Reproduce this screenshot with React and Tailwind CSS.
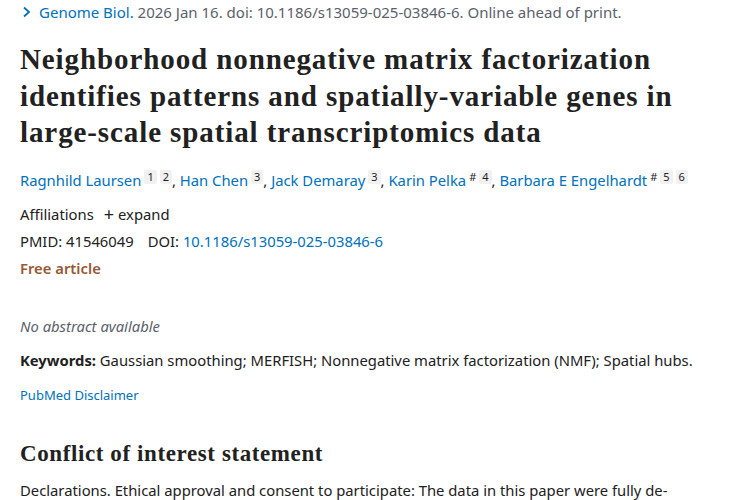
import React from "react";

const Sup = ({ children, plain }) =>
  plain ? (
    <span className="inline-block align-[5px] text-[11px] leading-[14px] text-[#212121] ml-[3px]">{children}</span>
  ) : (
    <span className="inline-block align-[5px] text-[11px] leading-[14px] text-[#212121] bg-[#f1f1f1] rounded-[2px] px-[3px] ml-[3px]">{children}</span>
  );

const serif = { fontFamily: '"Liberation Serif", "DejaVu Serif", serif' };

export default function App() {
  return (
    <div className="w-[750px] h-[500px] overflow-hidden bg-white px-[20px] flex flex-col text-[#212121] text-[14.8px] leading-[22px]" style={{ fontFamily: '"Noto Sans", "Open Sans", sans-serif' }}>
      <div className="pt-[1px] text-[15px] text-[#5b616b] flex items-center">
        <svg width="10" height="12" viewBox="0 0 10 12" className="mr-[7px] ml-[2px]">
          <path d="M2 1.5 L7 6 L2 10.5" fill="none" stroke="#0071bc" strokeWidth="1.8" />
        </svg>
        <span className="text-[#0071bc]">Genome Biol.</span>
        <span>&nbsp;2026 Jan 16. doi: 10.1186/s13059-025-03846-6. Online ahead of print.</span>
      </div>
      <h1 className="mt-[18px] w-[690px] text-[29px] leading-[36.5px] tracking-[0.9px] font-bold text-[#212121]" style={serif}>
        Neighborhood nonnegative matrix factorization identifies patterns and spatially-variable genes in large-scale spatial transcriptomics data
      </h1>
      <div className="mt-[18px]">
        <span className="text-[#0071bc]">Ragnhild Laursen</span><Sup>1</Sup><Sup>2</Sup>,{" "}
        <span className="text-[#0071bc]">Han Chen</span><Sup>3</Sup>,{" "}
        <span className="text-[#0071bc]">Jack Demaray</span><Sup>3</Sup>,{" "}
        <span className="text-[#0071bc]">Karin Pelka</span><Sup plain>#</Sup><Sup>4</Sup>,{" "}
        <span className="text-[#0071bc]">Barbara E Engelhardt</span><Sup plain>#</Sup><Sup>5</Sup><Sup>6</Sup>
      </div>
      <div className="mt-[12px] flex items-center">
        <span>Affiliations</span>
        <span className="ml-[10px] mr-[4px] text-[18px] leading-none">+</span>
        <span>expand</span>
      </div>
      <div className="mt-[5px]">
        PMID: 41546049<span className="ml-[14px]">DOI: </span>
        <span className="text-[#0071bc]">10.1186/s13059-025-03846-6</span>
      </div>
      <div className="mt-[5px] font-semibold text-[#985735]">Free article</div>
      <div className="mt-[36px] italic text-[#5b616b]">No abstract available</div>
      <div className="mt-[12px]">
        <span className="font-bold">Keywords:</span> Gaussian smoothing; MERFISH; Nonnegative matrix factorization (NMF); Spatial hubs.
      </div>
      <div className="mt-[13px] text-[13px] text-[#0071bc]">PubMed Disclaimer</div>
      <h2 className="mt-[33px] text-[23px] leading-[30px] tracking-[0.6px] font-bold" style={serif}>
        Conflict of interest statement
      </h2>
      <div className="mt-[10px]">
        Declarations. Ethical approval and consent to participate: The data in this paper were fully de-identified before analysis.
      </div>
    </div>
  );
}
